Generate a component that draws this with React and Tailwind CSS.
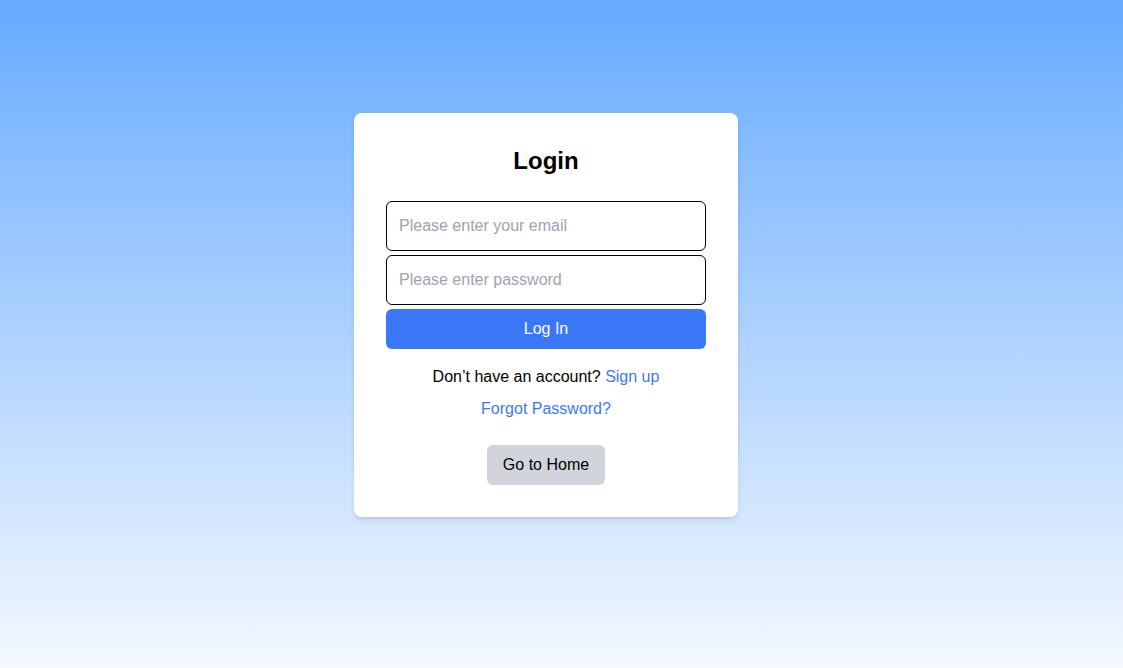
export default function App() {
  return (
    <div
      className="min-h-screen w-full bg-gradient-to-b from-[#66aaff] to-[#f4f8ff] flex justify-center pt-[113px] pr-[31px]"
      style={{ fontFamily: '"Liberation Sans", Arial, sans-serif' }}
    >
      <div className="w-96 h-fit bg-white rounded-lg shadow-md p-8 flex flex-col">
        <h1 className="text-2xl font-bold text-center text-black mb-6">Login</h1>
        <div className="flex flex-col gap-1">
          <input
            type="email"
            placeholder="Please enter your email"
            className="w-full border border-black rounded-md px-3 py-3 text-base leading-6 placeholder:text-[#9ca3af] outline-none"
          />
          <input
            type="password"
            placeholder="Please enter password"
            className="w-full border border-black rounded-md px-3 py-3 text-base leading-6 placeholder:text-[#9ca3af] outline-none"
          />
          <button className="w-full bg-[#3b78f7] text-white rounded-md py-2 text-base leading-6">
            Log In
          </button>
        </div>
        <p className="mt-4 text-center text-base leading-6 text-black">
          Don’t have an account? <a className="text-[#3b78f7]">Sign up</a>
        </p>
        <p className="mt-2 text-center text-base leading-6">
          <a className="text-[#3b78f7]">Forgot Password?</a>
        </p>
        <div className="mt-6 flex justify-center">
          <button className="bg-[#d1d5db] text-black rounded-md px-4 py-2 text-base leading-6">
            Go to Home
          </button>
        </div>
      </div>
    </div>
  );
}
